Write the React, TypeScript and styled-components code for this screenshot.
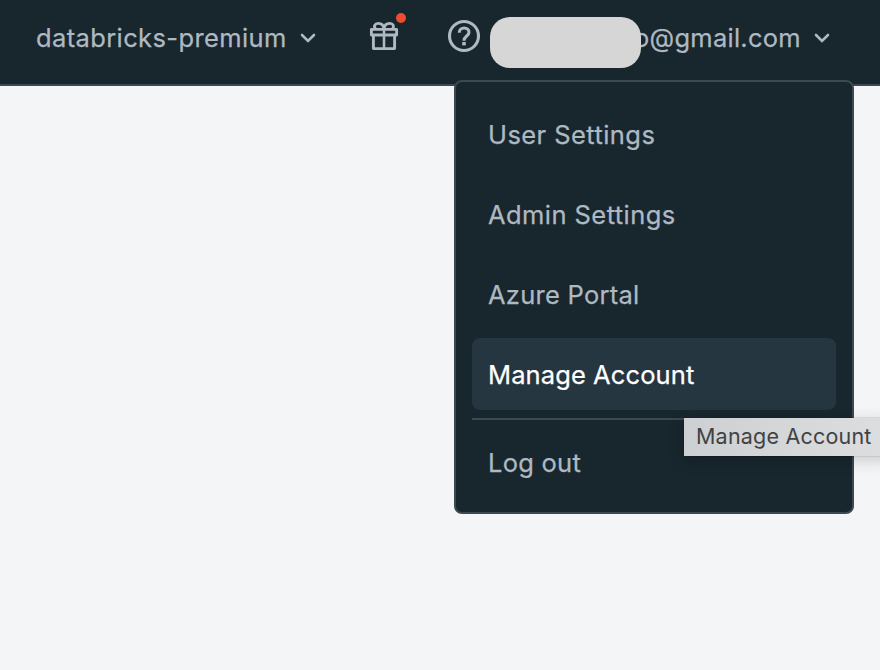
import React from "react";
import styled, { createGlobalStyle } from "styled-components";

const Global = createGlobalStyle`
  * { box-sizing: border-box; }
  html, body { margin: 0; background: #f4f5f7; overflow: hidden; }
  body { font-family: Inter, "Liberation Sans", sans-serif; font-size: 25.5px; font-weight: 400; color: #aeb9c2; }
`;

const Page = styled.div`
  position: relative;
  width: 880px;
  height: 670px;
  overflow: hidden;
  background: #f4f5f7;
`;

const TopBar = styled.header`
  display: flex;
  align-items: flex-start;
  height: 86px;
  padding-left: 36px;
  background: #18262d;
  border-bottom: 2px solid #3c4950;
`;

const Workspace = styled.div`
  display: flex;
  align-items: center;
  width: 332px;
  height: 76px;
`;

const Label = styled.span<{ $spacing: number; $width: number }>`
  width: ${(p) => p.$width}px;
  line-height: 32px;
  white-space: nowrap;
  letter-spacing: ${(p) => p.$spacing}px;
  -webkit-text-stroke: 0.25px currentColor;
`;

const Chevron = styled.svg`
  display: block;
  flex: none;
  width: 18px;
  height: 12px;
`;

const GiftButton = styled.div`
  position: relative;
  width: 32px;
  height: 76px;
  padding-top: 20px;
`;

const Icon = styled.svg`
  display: block;
`;

const Dot = styled.i`
  position: absolute;
  left: 28px;
  top: 13px;
  width: 10px;
  height: 10px;
  border-radius: 50%;
  background: #ee4b32;
`;

const Help = styled.div`
  width: 36px;
  margin-left: 46px;
  padding-top: 18px;
`;

const Account = styled.div`
  position: relative;
  display: flex;
  align-items: center;
  height: 76px;
  margin-left: 152px;
`;

const Redaction = styled.div`
  position: absolute;
  left: -144px;
  top: 17px;
  width: 151px;
  height: 51px;
  border-radius: 20px;
  background: #d6d6d6;
`;

const Menu = styled.nav`
  position: absolute;
  left: 454px;
  top: 80px;
  width: 400px;
  height: 434px;
  padding: 16px 16px 14px;
  background: #18262d;
  border: 2px solid #3c4950;
  border-radius: 8px;
`;

const MenuItem = styled.div<{ $active?: boolean; $spacing: number }>`
  display: flex;
  align-items: center;
  width: 364px;
  height: 72px;
  margin-bottom: 8px;
  padding: 2px 0 0 16px;
  line-height: 32px;
  white-space: nowrap;
  border-radius: 8px;
  letter-spacing: ${(p) => p.$spacing}px;
  -webkit-text-stroke: 0.25px currentColor;
  color: ${(p) => (p.$active ? "#ffffff" : "inherit")};
  background: ${(p) => (p.$active ? "#253640" : "transparent")};
`;

const Divider = styled.div`
  width: 364px;
  height: 2px;
  margin-bottom: 6px;
  background: #3c4950;
`;

const Tooltip = styled.div`
  position: absolute;
  left: 684px;
  top: 418px;
  width: 210px;
  height: 38px;
  padding-left: 12px;
  line-height: 37px;
  font-size: 21.5px;
  letter-spacing: 0.2px;
  white-space: nowrap;
  color: #414243;
  background: linear-gradient(90deg, #cdd0d2, #d7d9db 65%, #dddee0 100%);
  box-shadow: 0 0 1px rgba(0, 0, 0, 0.4), 0 4px 16px rgba(0, 0, 0, 0.18);
`;

const items = [
  { label: "User Settings", spacing: 0.43 },
  { label: "Admin Settings", spacing: 0.43 },
  { label: "Azure Portal", spacing: 0.26 },
  { label: "Manage Account", spacing: 0.1, active: true },
];

function Down() {
  return (
    <Chevron viewBox="0 0 18 12" fill="none" stroke="#aeb9c2" strokeWidth="2.6" strokeLinecap="round" strokeLinejoin="miter">
      <path d="M3 3 L9 8.9 L15 3" />
    </Chevron>
  );
}

export default function App() {
  return (
    <Page>
      <Global />
      <TopBar>
        <Workspace>
          <Label $spacing={0.38} $width={263}>databricks-premium</Label>
          <Down />
        </Workspace>
        <GiftButton>
          <Icon width="32" height="32" viewBox="0 0 32 32" fill="none" stroke="#aeb9c2" strokeWidth="2.9" strokeLinejoin="round">
            <rect x="3.4" y="9.4" width="25.2" height="5.6" />
            <path d="M5.4 15V28.6H26.6V15" />
            <path d="M16 9V28.6" strokeWidth="2.6" />
            <path d="M7.5 9C5.2 6.2 7.2 3.4 10 3.4C13.2 3.4 15.8 5.3 16 9C16.2 5.3 18.8 3.4 22 3.4C24.8 3.4 26.8 6.2 24.5 9" />
          </Icon>
          <Dot />
        </GiftButton>
        <Help>
          <Icon width="36" height="36" viewBox="0 0 36 36" fill="none" stroke="#aeb9c2" strokeWidth="3.1">
            <circle cx="18" cy="18" r="14.5" />
            <path d="M13.2 14.8C13.2 11.8 15.3 10 18.1 10C21 10 23 11.8 23 14.3C23 18 18 18.2 18 22.7" />
            <path d="M16.2 25.7H19.8" strokeWidth="3.4" />
          </Icon>
        </Help>
        <Account>
          <Label $spacing={0.25} $width={179}>o@gmail.com</Label>
          <Down />
          <Redaction />
        </Account>
      </TopBar>
      <Menu>
        {items.map((item) => (
          <MenuItem key={item.label} $active={item.active} $spacing={item.spacing}>
            {item.label}
          </MenuItem>
        ))}
        <Divider />
        <MenuItem $spacing={0.25}>Log out</MenuItem>
      </Menu>
      <Tooltip>Manage Account</Tooltip>
    </Page>
  );
}
